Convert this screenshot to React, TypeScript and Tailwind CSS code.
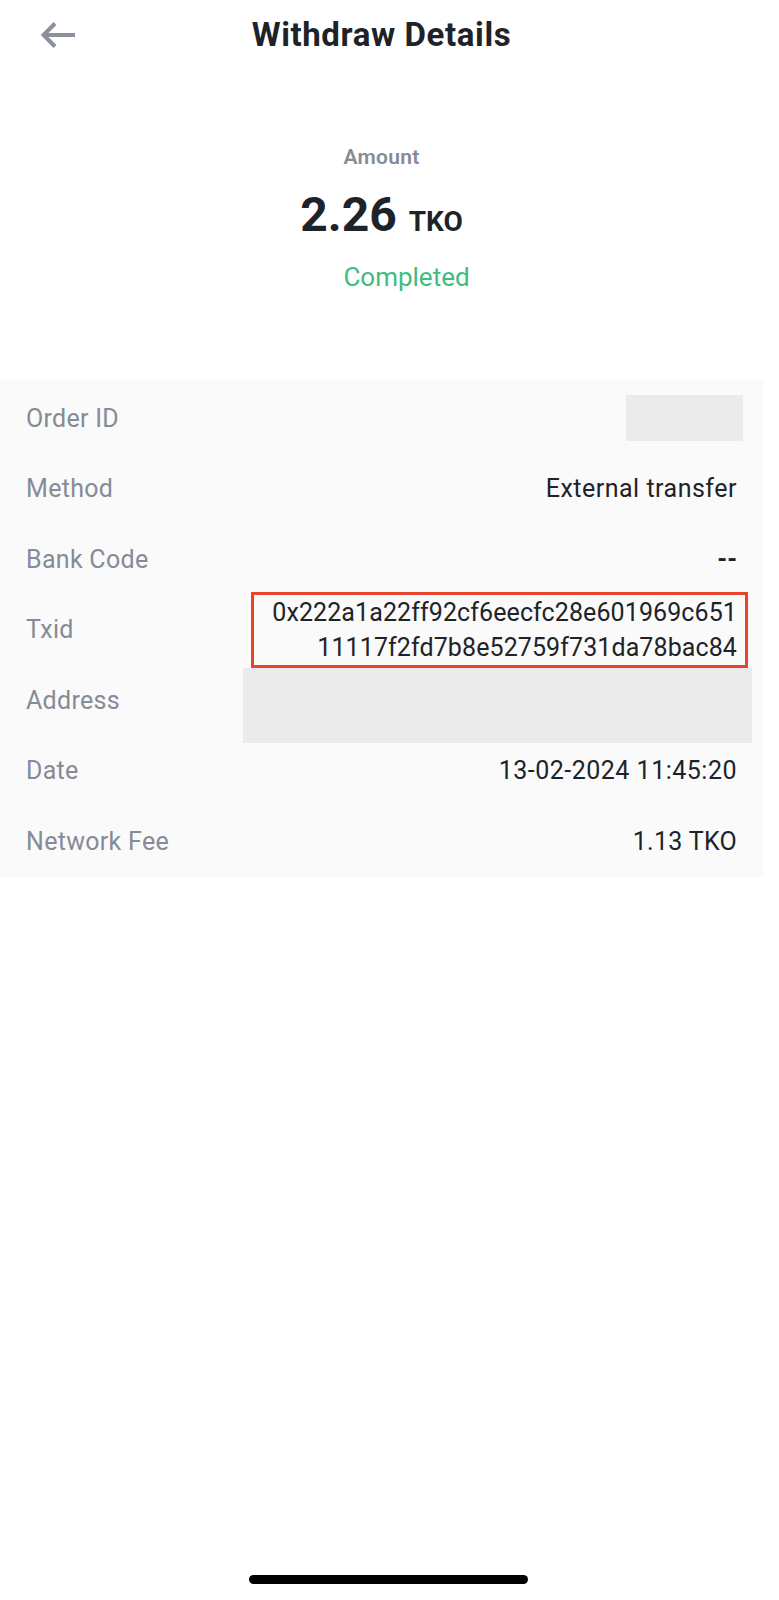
import React from "react";

const font = { fontFamily: "Roboto, 'Noto Sans', sans-serif" };

function Row({ label, children }: { label: string; children: React.ReactNode }) {
  return (
    <div className="flex h-[70.5px] items-center justify-between pl-[26px] pr-[26px]">
      <span className="text-[25px] tracking-[0.3px] text-[#858b97]">{label}</span>
      {children}
    </div>
  );
}

export default function App() {
  return (
    <div className="flex min-h-[1600px] w-[779px] flex-col bg-white" style={font}>
      <div className="w-[763px]">
        <div className="grid h-[70px] grid-cols-[1fr_auto_1fr] items-center">
          <div className="pl-[40px]">
            <svg width="36" height="28" viewBox="0 0 36 28" fill="none">
              <path d="M35 14H4" stroke="#8a909c" strokeWidth="4" />
              <path d="M15 2.5L3.5 14L15 25.5" stroke="#8a909c" strokeWidth="4" strokeLinejoin="miter" />
            </svg>
          </div>
          <h1 className="text-[33px] font-bold tracking-[0.6px] text-[#1e2329]">Withdraw Details</h1>
          <div />
        </div>

        <div className="mt-[75px] flex flex-col items-center">
          <div className="text-[21px] font-semibold leading-[24px] tracking-[0.3px] text-[#858b97]">Amount</div>
          <div className="mt-[18px] flex items-baseline gap-[12px] leading-[56px] text-[#1e2329]">
            <span className="text-[48px] font-bold">2.26</span>
            <span className="text-[28px] font-bold">TKO</span>
          </div>
          <div className="mt-[12px] pl-[50px] text-[26px] leading-[30px] text-[#3fbd7f]">Completed</div>
        </div>

        <div className="mt-[88px] bg-[#fafafa] pt-[3px]">
          <Row label="Order ID">
            <div className="mr-[-6px] h-[46px] w-[117px] bg-[#ebebeb]" />
          </Row>
          <Row label="Method">
            <span className="text-[25px] tracking-[0.5px] text-[#1e2329]">External transfer</span>
          </Row>
          <Row label="Bank Code">
            <span className="text-[25px] font-bold text-[#1e2329]">--</span>
          </Row>
          <Row label="Txid">
            <div className="mr-[-11px] border-[3px] border-[#e8442c] pl-[18px] pr-[8px] text-right text-[25px] leading-[35px] tracking-[0.1px] text-[#1e2329]">
              <div>0x222a1a22ff92cf6eecfc28e601969c651</div>
              <div>11117f2fd7b8e52759f731da78bac84</div>
            </div>
          </Row>
          <Row label="Address">
            <div className="mr-[-15px] mt-[10px] h-[75px] w-[509px] bg-[#ebebeb]" />
          </Row>
          <Row label="Date">
            <span className="text-[25px] tracking-[0.5px] text-[#1e2329]">13-02-2024 11:45:20</span>
          </Row>
          <Row label="Network Fee">
            <span className="text-[25px] tracking-[0.3px] text-[#1e2329]">1.13 TKO</span>
          </Row>
        </div>
      </div>

      <div className="mb-[16px] mt-auto flex w-[779px] justify-center">
        <div className="ml-[-2px] h-[9px] w-[279px] rounded-full bg-black" />
      </div>
    </div>
  );
}
